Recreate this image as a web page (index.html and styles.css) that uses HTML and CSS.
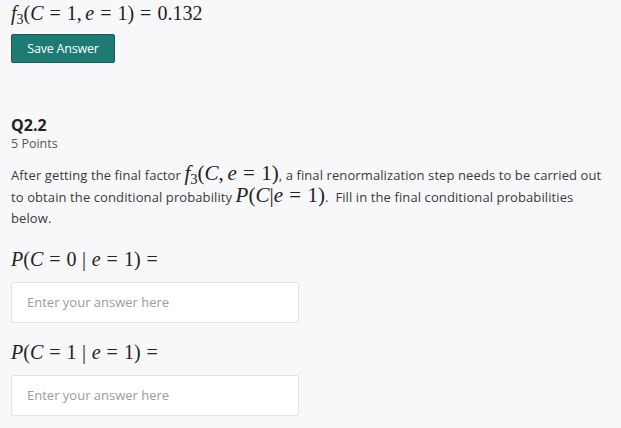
FILE: index.html
```html
<!DOCTYPE html>
<html>
<head>
<meta charset="utf-8">
<link rel="stylesheet" href="styles.css">
</head>
<body>
<div class="page">
  <div class="math top-math"><i>f</i><sub>3</sub>(<i>C</i><span class="op">=</span>1,<span class="sp"></span><i>e</i><span class="op">=</span>1)<span class="op">=</span>0.132</div>
  <button class="btn">Save Answer</button>

  <section class="question">
    <h2 class="q-title">Q2.2</h2>
    <div class="q-points">5 Points</div>
    <p class="q-text">After getting the final factor <span class="math inline"><i>f</i><sub>3</sub>(<i>C</i>,<span class="sp"></span><i>e</i><span class="op">=</span>1)</span>, a final renormalization step needs to be carried out to obtain the conditional probability <span class="math inline"><i>P</i>(<i>C</i>|<i>e</i><span class="op">=</span>1)</span>. &nbsp;Fill in the final conditional probabilities below.</p>

    <div class="field">
      <div class="math label"><i>P</i>(<i>C</i><span class="op">=</span>0<span class="bar">|</span><i>e</i><span class="op">=</span>1)<span class="op">=</span></div>
      <input class="answer" type="text" placeholder="Enter your answer here">
    </div>
    <div class="field">
      <div class="math label"><i>P</i>(<i>C</i><span class="op">=</span>1<span class="bar">|</span><i>e</i><span class="op">=</span>1)<span class="op">=</span></div>
      <input class="answer" type="text" placeholder="Enter your answer here">
    </div>
  </section>
</div>
</body>
</html>
```
FILE: styles.css
```css
html, body { margin: 0; padding: 0; }
body {
  background: #f8f8fb;
  font-family: "Open Sans", "Lato", sans-serif;
  color: #333;
}
.page {
  padding: 0 11px;
  width: 288px;
}
.math {
  font-family: "Liberation Serif", "DejaVu Serif", serif;
  color: #222;
  white-space: nowrap;
}
.math i { font-style: italic; }
.math sub { font-size: 0.7em; vertical-align: -0.25em; line-height: 0; }
.math .op { margin: 0 0.3em; }
.math .sp { display: inline-block; width: 0.17em; }
.math .bar { margin: 0 0.28em; }
.top-math {
  font-size: 20px;
  line-height: 26px;
}
.btn {
  display: block;
  margin-top: 8px;
  background: #1d7b74;
  border: 1px solid #145c57;
  border-radius: 2px;
  color: #fff;
  font-family: "Open Sans", sans-serif;
  font-size: 12.5px;
  letter-spacing: -0.2px;
  height: 29px;
  width: 104px;
  padding: 0;
}
.question { margin-top: 52px; width: 600px; }
.q-title {
  margin: 0;
  font-size: 16px;
  font-weight: 700;
  color: #222;
  line-height: 20px;
}
.q-points {
  font-size: 12.5px;
  color: #555;
  margin-top: 1px;
  line-height: 16px;
}
.q-text {
  margin: 13px 0 0;
  font-size: 13px;
  letter-spacing: 0.1px;
  line-height: 21.5px;
  color: #3a3a3a;
}
.math.inline { font-size: 21px; line-height: 0; letter-spacing: 0; }
.field { margin-top: 16px; width: 288px; }
.label { font-size: 20px; line-height: 26px; }
.answer {
  display: block;
  box-sizing: border-box;
  margin-top: 10px;
  width: 288px;
  height: 41px;
  background: #fff;
  border: 1px solid #e1e1ea;
  border-radius: 2px;
  padding: 0 15px;
  font-family: "Open Sans", sans-serif;
  font-size: 13px;
}
.answer::placeholder { color: #9a9aa6; }
```
